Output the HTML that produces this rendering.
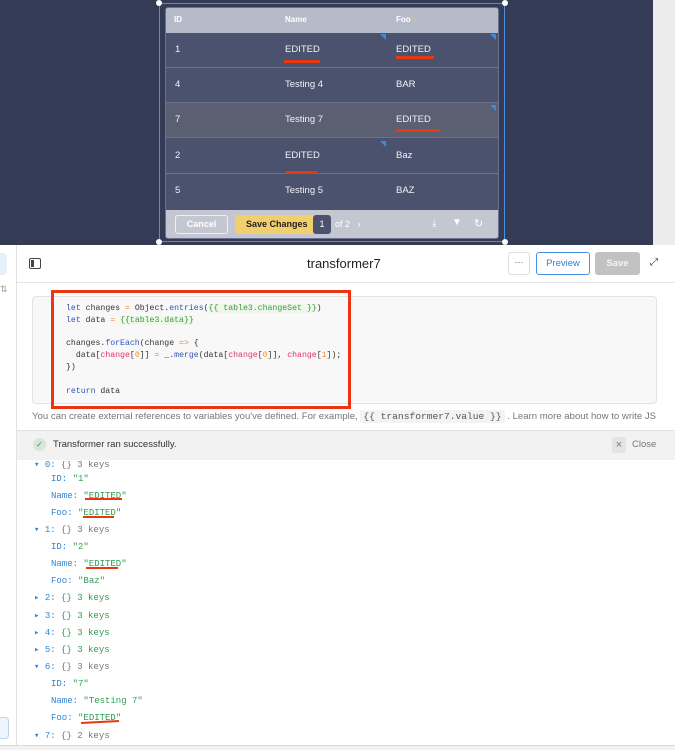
<!DOCTYPE html>
<html><head><meta charset="utf-8"><style>
*{margin:0;padding:0;box-sizing:border-box}
body{width:675px;height:750px;position:relative;overflow:hidden;background:#fff;font-family:"Liberation Sans",sans-serif}
.a{position:absolute}
.t{font-size:9px;color:#fff}
.mono{font-family:"Liberation Mono",monospace}
.row{position:absolute;left:166px;width:332px;height:35px;background:#4a526d;border-bottom:1px solid #6a7290}
.row span{position:absolute;top:11px;font-size:9.5px;color:#f3f3f6}
.tri{position:absolute;width:0;height:0;border-top:6px solid #3b8ce0;border-left:6px solid transparent}
.ul{position:absolute;height:3px;background:#e8380f}
.code{font-size:8.2px;line-height:11.8px;color:#333;white-space:pre}
.k{color:#2b55b8}.g{color:#3c9a45;background:#eef7ea}.r{color:#e0306a}.o{color:#f08a3c}
.js{position:absolute;font-family:"Liberation Mono",monospace;font-size:9px;letter-spacing:0;color:#2f86d6;white-space:pre;line-height:12px}
.js .s{color:#2f9d53}.js .c{color:#777}
</style></head><body>
<div class="a" style="left:0;top:0;width:653px;height:245px;background:#343b54"></div>
<div class="a" style="left:653px;top:0;width:22px;height:245px;background:#ececec"></div>
<div class="a" style="left:159px;top:3px;width:346px;height:239px;border:1px solid #4a90e2"></div>
<div class="a" style="left:156px;top:0;width:6px;height:6px;border-radius:3px;background:#fff"></div>
<div class="a" style="left:502px;top:0;width:6px;height:6px;border-radius:3px;background:#fff"></div>
<div class="a" style="left:156px;top:239px;width:6px;height:6px;border-radius:3px;background:#fff"></div>
<div class="a" style="left:502px;top:239px;width:6px;height:6px;border-radius:3px;background:#fff"></div>
<div class="a" style="left:165px;top:7px;width:334px;height:232px;background:#4a526d;border:1px solid #6a7290;border-radius:3px"></div>
<div class="a" style="left:166px;top:8px;width:332px;height:25px;background:#b6bbca;border-radius:2px 2px 0 0"></div>
<span class="a t" style="left:174px;top:15px;font-size:8px;font-weight:bold">ID</span>
<span class="a t" style="left:285px;top:15px;font-size:8px;font-weight:bold">Name</span>
<span class="a t" style="left:396px;top:15px;font-size:8px;font-weight:bold">Foo <span style="color:#f5c542">↑</span></span>
<div class="row" style="top:33px"><span style="left:9px">1</span><span style="left:119px">EDITED</span><span style="left:230px">EDITED</span></div>
<div class="row" style="top:68px"><span style="left:9px">4</span><span style="left:119px">Testing 4</span><span style="left:230px">BAR</span></div>
<div class="row" style="top:103px;background:#5a5f71"><span style="left:9px">7</span><span style="left:119px">Testing 7</span><span style="left:230px">EDITED</span></div>
<div class="row" style="top:139px"><span style="left:9px">2</span><span style="left:119px">EDITED</span><span style="left:230px">Baz</span></div>
<div class="row" style="top:174px;border:none"><span style="left:9px">5</span><span style="left:119px">Testing 5</span><span style="left:230px">BAZ</span></div>
<div class="tri" style="left:380px;top:34px"></div>
<div class="tri" style="left:490px;top:34px"></div>
<div class="tri" style="left:490px;top:105px"></div>
<div class="tri" style="left:380px;top:141px"></div>
<div class="ul" style="left:284px;top:60px;width:36px"></div>
<div class="ul" style="left:396px;top:56px;width:38px"></div>
<div class="ul" style="left:395px;top:129px;width:45px"></div>
<div class="ul" style="left:286px;top:171px;width:31px"></div>
<div class="a" style="left:166px;top:210px;width:332px;height:28px;background:#c4c7d2;border-radius:0 0 2px 2px"></div>
<div class="a" style="left:175px;top:215px;width:53px;height:19px;border:1.5px solid #eef0f4;border-radius:3px;font-size:9px;color:#fff;text-align:center;line-height:16px;font-weight:bold">Cancel</div>
<div class="a" style="left:235px;top:215px;width:84px;height:19px;background:#f2cf6d;border-radius:3px;font-size:9px;color:#222;line-height:19px;padding-left:11px;font-weight:bold">Save Changes</div>
<div class="a" style="left:313px;top:215px;width:18px;height:19px;background:#4a526d;border-radius:3px;font-size:9px;color:#fff;text-align:center;line-height:19px">1</div>
<span class="a t" style="left:335px;top:219px">of 2 &nbsp;&nbsp;›</span>
<span class="a t" style="left:432px;top:218px;font-size:10px">⤓</span>
<span class="a t" style="left:452px;top:217px;font-size:10px">▼</span>
<span class="a t" style="left:474px;top:217px;font-size:11px">↻</span>
<div class="a" style="left:16px;top:245px;width:1px;height:500px;background:#e2e2e2"></div>
<div class="a" style="left:0;top:253px;width:7px;height:22px;background:#e6f0fb;border-radius:0 4px 4px 0"></div>
<span class="a" style="left:0;top:284px;font-size:9px;color:#999">⇅</span>
<div class="a" style="left:0;top:717px;width:9px;height:22px;border:1px solid #b8d4f0;border-left:none;border-radius:0 4px 4px 0;background:#eef5fc"></div>
<div class="a" style="left:17px;top:282px;width:658px;height:1px;background:#e6e6e6"></div>
<div class="a" style="left:29px;top:258px;width:12px;height:11px;border:1.5px solid #444;border-radius:2px"></div>
<div class="a" style="left:31px;top:260px;width:3px;height:7px;background:#444"></div>
<span class="a" style="left:307px;top:256px;font-size:13px;color:#222">transformer7</span>
<div class="a" style="left:508px;top:252px;width:22px;height:23px;border:1px solid #ddd;border-radius:3px;font-size:9px;color:#555;text-align:center;line-height:18px">···</div>
<div class="a" style="left:536px;top:252px;width:54px;height:23px;border:1px solid #4a90e2;border-radius:3px;font-size:9.5px;color:#2f7fd6;text-align:center;line-height:21px">Preview</div>
<div class="a" style="left:595px;top:252px;width:45px;height:23px;background:#c2c2c2;border-radius:3px;font-size:9.5px;color:#f4f4f4;text-align:center;line-height:23px;font-weight:bold">Save</div>
<span class="a" style="left:650px;top:257px;font-size:10px;color:#333">⤢</span>
<div class="a" style="left:32px;top:296px;width:625px;height:108px;background:#f8f8f8;border:1px solid #e3e3e3;border-radius:4px"></div>
<div class="a" style="left:51px;top:290px;width:300px;height:119px;border:3px solid #ee3312"></div>
<div class="a mono code" style="left:66px;top:303px"><span class="k">let</span> changes <span class="o">=</span> Object.<span class="k">entries</span>(<span class="g">{{ table3.changeSet }}</span>)
<span class="k">let</span> data <span class="o">=</span> <span class="g">{{table3.data}}</span>

changes.<span class="k">forEach</span>(change <span class="o">=&gt;</span> {
  data[<span class="r">change</span>[<span class="o">0</span>]] <span class="o">=</span> _.<span class="k">merge</span>(data[<span class="r">change</span>[<span class="o">0</span>]], <span class="r">change</span>[<span class="o">1</span>]);
})

<span class="k">return</span> data</div>
<div class="a" style="left:32px;top:411px;font-size:9.6px;color:#777;white-space:nowrap">You can create external references to variables you've defined. For example, <span class="mono" style="background:#f3f3f3;color:#555;padding:1px 3px">{{ transformer7.value }}</span> . Learn more about how to write JS</div>
<div class="a" style="left:17px;top:430px;width:658px;height:30px;background:#f2f2f2;border-top:1px solid #e2e2e2"></div>
<div class="a" style="left:33px;top:438px;width:13px;height:13px;border-radius:7px;background:#d7e6d8;font-size:8px;color:#4a8a55;text-align:center;line-height:13px">✓</div>
<span class="a" style="left:53px;top:439px;font-size:9.5px;color:#333">Transformer ran successfully.</span>
<div class="a" style="left:612px;top:437px;width:14px;height:16px;background:#e4e4e4;border-radius:2px;font-size:11px;color:#777;text-align:center;line-height:16px">×</div>
<span class="a" style="left:632px;top:439px;font-size:9.5px;color:#777">Close</span>
<div class="js" style="left:34px;top:459px;clip-path:inset(2px 0 0 0)">▾ 0: <span class="c">{} 3 keys</span></div>
<div class="js" style="left:51px;top:473px">ID: <span class="s">"1"</span></div>
<div class="js" style="left:51px;top:490px">Name: <span class="s">"EDITED"</span></div>
<div class="js" style="left:51px;top:507px">Foo: <span class="s">"EDITED"</span></div>
<div class="js" style="left:34px;top:524px">▾ 1: <span class="c">{} 3 keys</span></div>
<div class="js" style="left:51px;top:541px">ID: <span class="s">"2"</span></div>
<div class="js" style="left:51px;top:558px">Name: <span class="s">"EDITED"</span></div>
<div class="js" style="left:51px;top:575px">Foo: <span class="s">"Baz"</span></div>
<div class="js" style="left:34px;top:592px">▸ 2: <span class="s">{} 3 keys</span></div>
<div class="js" style="left:34px;top:610px">▸ 3: <span class="s">{} 3 keys</span></div>
<div class="js" style="left:34px;top:627px">▸ 4: <span class="s">{} 3 keys</span></div>
<div class="js" style="left:34px;top:644px">▸ 5: <span class="s">{} 3 keys</span></div>
<div class="js" style="left:34px;top:661px">▾ 6: <span class="c">{} 3 keys</span></div>
<div class="js" style="left:51px;top:678px">ID: <span class="s">"7"</span></div>
<div class="js" style="left:51px;top:695px">Name: <span class="s">"Testing 7"</span></div>
<div class="js" style="left:51px;top:712px">Foo: <span class="s">"EDITED"</span></div>
<div class="js" style="left:34px;top:730px">▾ 7: <span class="c">{} 2 keys</span></div>
<div class="ul" style="left:85px;top:498px;width:37px;height:2px"></div>
<div class="ul" style="left:83px;top:516px;width:31px;height:2px"></div>
<div class="ul" style="left:86px;top:567px;width:32px;height:2px"></div>
<div class="ul" style="left:81px;top:721px;width:38px;height:2px;transform:rotate(-3deg)"></div>
<div class="a" style="left:0;top:745px;width:675px;height:5px;background:#f2f2f2;border-top:1px solid #dcdcdc"></div>
</body></html>
